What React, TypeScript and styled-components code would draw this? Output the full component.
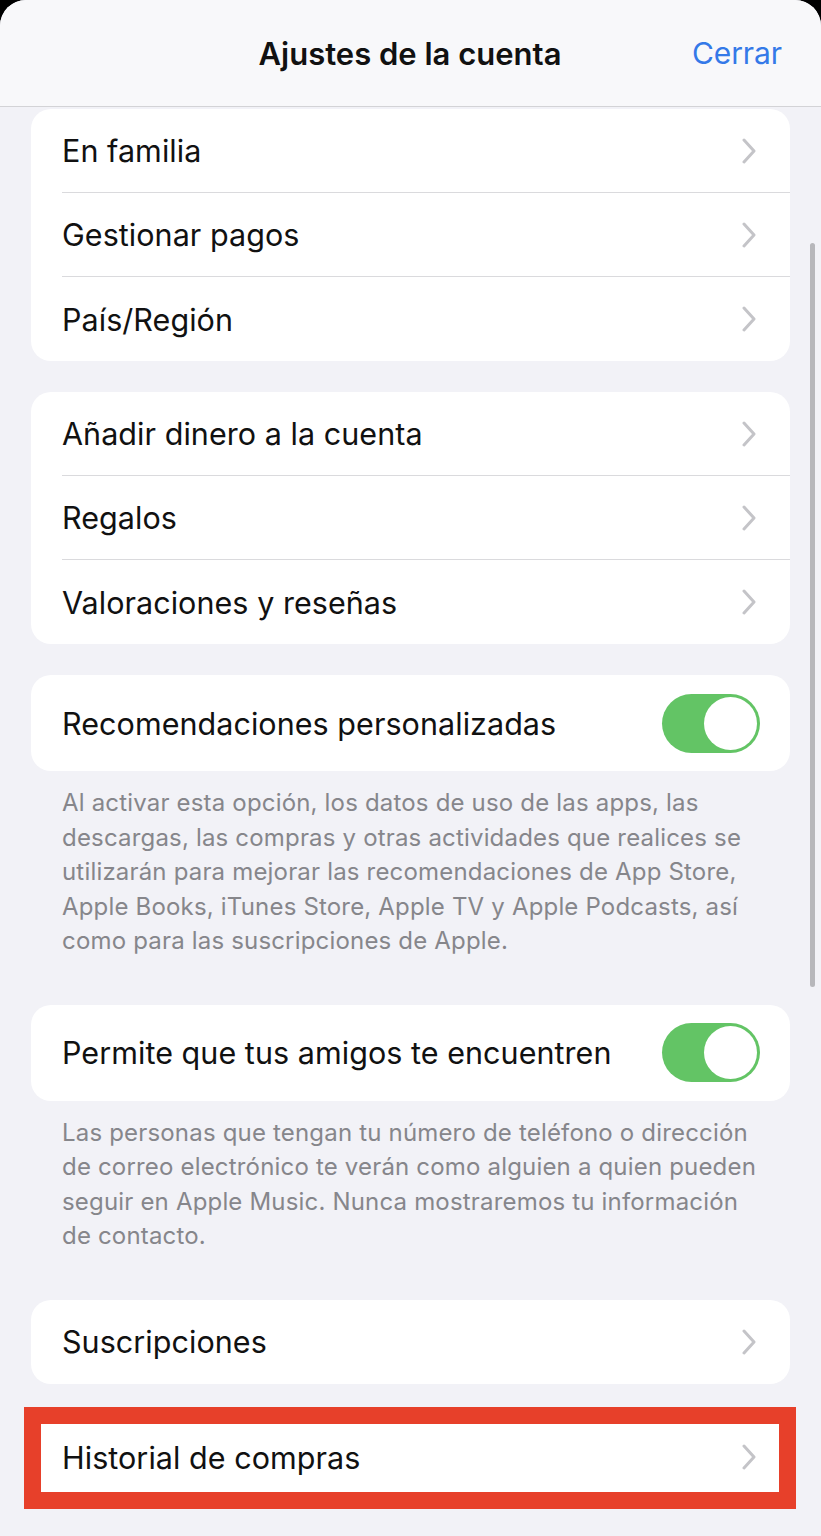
import React from "react";
import styled, { createGlobalStyle } from "styled-components";

const GlobalStyle = createGlobalStyle`
  html, body {
    margin: 0;
    padding: 0;
    background: #000;
  }
  body {
    font-family: Inter, "Noto Sans", "Liberation Sans", sans-serif;
    -webkit-font-smoothing: antialiased;
  }
`;

const Sheet = styled.div`
  position: relative;
  width: 821px;
  height: 1536px;
  overflow: hidden;
  background: #f2f2f7;
  border-radius: 26px 26px 0 0;
`;

const NavBar = styled.header`
  height: 106px;
  display: grid;
  grid-template-columns: 1fr auto 1fr;
  align-items: center;
  background: #f8f8fa;
  border-bottom: 1px solid #d3d3d6;
  padding: 0 39px 0 0;
`;

const Title = styled.h1`
  grid-column: 2;
  margin: 0;
  font-size: 31px;
  font-weight: 600;
  color: #111;
  transform: translateX(19px);
`;

const CloseButton = styled.button`
  grid-column: 3;
  justify-self: end;
  border: 0;
  background: none;
  padding: 0;
  font: inherit;
  font-size: 30px;
  color: #3479e8;
  letter-spacing: -0.1px;
`;

const Content = styled.main`
  padding: 2px 31px 0;
  display: flex;
  flex-direction: column;
`;

const Card = styled.section<{ $gap?: number }>`
  position: relative;
  background: #fff;
  border-radius: 20px;
  margin-bottom: ${(p) => p.$gap ?? 31}px;
`;

const Row = styled.div<{ $tall?: boolean }>`
  height: ${(p) => (p.$tall ? 96 : 84)}px;
  display: flex;
  align-items: center;
  margin-left: 31px;
  padding-right: 34px;
  border-bottom: 1px solid #dadadd;
  box-sizing: border-box;
  &:last-child {
    border-bottom: 0;
  }
`;

const Label = styled.span`
  flex: 1;
  font-size: 30.5px;
  color: #111;
  letter-spacing: 0.05px;
`;

const Footer = styled.p`
  margin: 0 0 46px;
  padding: 15px 0 0 31px;
  font-size: 24px;
  line-height: 34.5px;
  color: #86868b;
  white-space: nowrap;
  letter-spacing: 0.18px;
`;

const SwitchTrack = styled.span`
  width: 98px;
  height: 59px;
  border-radius: 30px;
  background: #63c465;
  display: flex;
  align-items: center;
  justify-content: flex-end;
  padding: 3px;
  box-sizing: border-box;
  margin-right: -4px;
`;

const SwitchKnob = styled.span`
  width: 53px;
  height: 53px;
  border-radius: 50%;
  background: #fff;
`;

const Highlight = styled.div`
  position: absolute;
  left: -7px;
  top: -9px;
  width: 772px;
  height: 102px;
  border: 17px solid #e7402a;
  box-sizing: border-box;
  pointer-events: none;
`;

const ScrollIndicator = styled.div`
  position: absolute;
  right: 6px;
  top: 243px;
  width: 5px;
  height: 744px;
  border-radius: 3px;
  background: #b7b7bb;
`;

const Chevron = () => (
  <svg width="14" height="26" viewBox="0 0 14 26" fill="none">
    <path
      d="M2 2 L12 13 L2 24"
      stroke="#c4c4c8"
      strokeWidth="3"
      strokeLinecap="round"
      strokeLinejoin="round"
    />
  </svg>
);

const Switch = () => (
  <SwitchTrack>
    <SwitchKnob />
  </SwitchTrack>
);

const LinkRow = ({ label }: { label: string }) => (
  <Row>
    <Label>{label}</Label>
    <Chevron />
  </Row>
);

export default function App() {
  return (
    <>
      <GlobalStyle />
      <Sheet>
        <NavBar>
          <Title>Ajustes de la cuenta</Title>
          <CloseButton>Cerrar</CloseButton>
        </NavBar>
        <Content>
          <Card>
            <LinkRow label="En familia" />
            <LinkRow label="Gestionar pagos" />
            <LinkRow label="País/Región" />
          </Card>
          <Card>
            <LinkRow label="Añadir dinero a la cuenta" />
            <LinkRow label="Regalos" />
            <LinkRow label="Valoraciones y reseñas" />
          </Card>
          <Card $gap={0}>
            <Row $tall>
              <Label>Recomendaciones personalizadas</Label>
              <Switch />
            </Row>
          </Card>
          <Footer>
            Al activar esta opción, los datos de uso de las apps, las
            <br />
            descargas, las compras y otras actividades que realices se
            <br />
            utilizarán para mejorar las recomendaciones de App Store,
            <br />
            Apple Books, iTunes Store, Apple TV y Apple Podcasts, así
            <br />
            como para las suscripciones de Apple.
          </Footer>
          <Card $gap={0}>
            <Row $tall>
              <Label>Permite que tus amigos te encuentren</Label>
              <Switch />
            </Row>
          </Card>
          <Footer>
            Las personas que tengan tu número de teléfono o dirección
            <br />
            de correo electrónico te verán como alguien a quien pueden
            <br />
            seguir en Apple Music. Nunca mostraremos tu información
            <br />
            de contacto.
          </Footer>
          <Card $gap={32}>
            <LinkRow label="Suscripciones" />
          </Card>
          <Card>
            <LinkRow label="Historial de compras" />
            <Highlight />
          </Card>
        </Content>
        <ScrollIndicator />
      </Sheet>
    </>
  );
}
